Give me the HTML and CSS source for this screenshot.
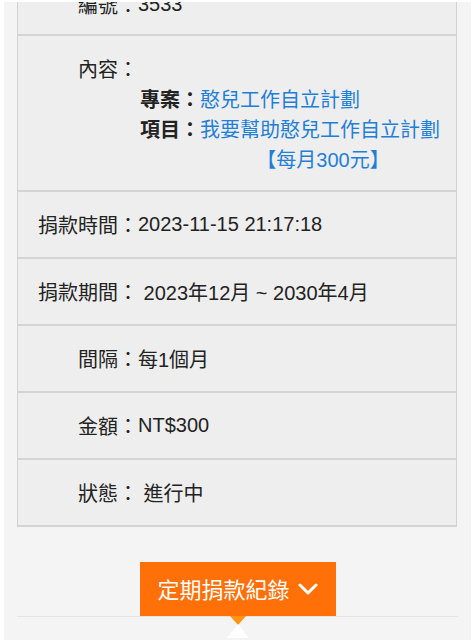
FILE: index.html
```html
<!DOCTYPE html>
<html lang="zh-Hant">
<head>
	<meta charset="UTF-8">
	<title>定期捐款</title>
	<link rel="stylesheet" href="styles.css">
</head>
<body>
	<div class="panel">
		<div class="list">
			<div class="row first">
				<span class="label">編號：</span><span class="val">3533</span>
			</div>
			<div class="row content">
				<div class="line"><span class="label">內容：</span></div>
				<div class="sub">
					<span class="sublabel">專案：</span>
					<span class="link">憨兒工作自立計劃</span>
				</div>
				<div class="sub">
					<span class="sublabel">項目：</span>
					<span class="link">我要幫助憨兒工作自立計劃<span class="price">【每月300元】</span></span>
				</div>
			</div>
			<div class="row">
				<span class="label">捐款時間：</span><span class="val">2023-11-15 21:17:18</span>
			</div>
			<div class="row">
				<span class="label">捐款期間：</span><span class="val">&nbsp;2023年12月 ~ 2030年4月</span>
			</div>
			<div class="row">
				<span class="label">間隔：</span><span class="val">每1個月</span>
			</div>
			<div class="row">
				<span class="label">金額：</span><span class="val">NT$300</span>
			</div>
			<div class="row">
				<span class="label">狀態：</span><span class="val">&nbsp;進行中</span>
			</div>
		</div>
		<div class="tabbar">
			<div class="tab">
				定期捐款紀錄
				<svg class="chev" width="20" height="12" viewBox="0 0 20 12"><path d="M2 2 L10 10 L18 2" fill="none" stroke="#fff" stroke-width="3" stroke-linecap="round" stroke-linejoin="round"/></svg>
			</div>
		</div>
	</div>
</body>
</html>
```

FILE: styles.css
```css
*{
	margin: 0;
	padding: 0;
	box-sizing: border-box;
}
body{
	background: #fff;
	font-family: "Liberation Sans", "Noto Sans CJK TC", sans-serif;
	font-size: 20px;
	color: #222;
	overflow: hidden;
}
.panel{
	margin: 2px 3px 0 4px;
	height: 638px;
	background: #f4f4f4;
	overflow: hidden;
	padding: 0 13px;
}
.list{
	margin-top: -33px;
	border-left: 1px solid #d2d2d2;
	border-right: 1px solid #d2d2d2;
	background: #eeeeee;
	width: 440px;
}
.row{
	display: flex;
	align-items: center;
	height: 67px;
	border-bottom: 2px solid #d4d4d4;
}
.row.first{
	padding-top: 6px;
}
.row .label{
	width: 120px;
	text-align: right;
	white-space: nowrap;
}
.row .val{
	white-space: nowrap;
}
.content{
	display: block;
	height: 156px;
	padding-top: 19px;
}
.line, .sub{
	display: flex;
	line-height: 30px;
}
.sub .sublabel{
	width: 182px;
	text-align: right;
	font-weight: bold;
	flex-shrink: 0;
}
.link{
	color: #1e7fd8;
	width: 250px;
}
.price{
	display: block;
	width: 240px;
	text-align: center;
	padding-left: 6px;
}
.tabbar{
	position: relative;
	margin-top: 35px;
	height: 55px;
	border-bottom: 1px solid #e4e4e4;
	display: flex;
	justify-content: center;
}
.tabbar::after{
	content: "";
	position: absolute;
	left: 210px;
	top: 62px;
	border-left: 11px solid transparent;
	border-right: 11px solid transparent;
	border-bottom: 14px solid #fff;
}
.tab{
	position: relative;
	width: 196px;
	height: 54px;
	background: #ff7008;
	color: #fff;
	font-size: 22px;
	display: flex;
	align-items: center;
	justify-content: center;
	gap: 8px;
	padding-bottom: 2px;
}
.tab::after{
	content: "";
	position: absolute;
	left: 90px;
	top: 54px;
	border-left: 8px solid transparent;
	border-right: 8px solid transparent;
	border-top: 9px solid #ff9414;
}
.chev{
	margin-top: 2px;
}
```
